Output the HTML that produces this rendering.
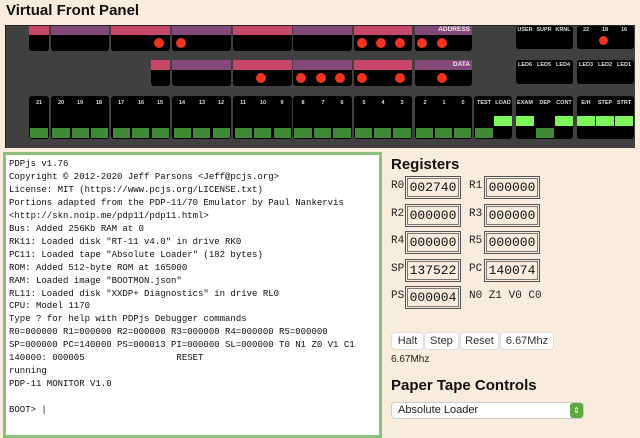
<!DOCTYPE html><html><head><style>
body{margin:0;width:640px;height:422px;overflow:hidden;background:#f9ecdc;font-family:"Liberation Sans",sans-serif;position:relative}
.a{position:absolute}
h1{position:absolute;left:6px;top:2px;margin:0;font-size:15px;font-weight:bold;color:#111}
.panel{left:5px;top:25px;width:629px;height:122px;background:#404040;border-top:1px solid #222;border-left:1px solid #222}
.bar{position:absolute;height:9px}
.pk{background:#c8466a}.pu{background:#824878}
.blk{position:absolute;background:#000;border-radius:0 0 3px 3px}
.sw{position:absolute;background:#000;border-radius:3px}
.d{position:absolute;width:10px;height:10px;border-radius:50%;background:#f03322}
.g{position:absolute;height:10px;background:#3f8a35}
.lg{position:absolute;height:10px;background:#7cf55a}
.l{position:absolute;color:#ddd;font-size:5.5px;font-weight:bold;text-align:center;width:20px}
.bt{position:absolute;color:#eee;font-size:6.5px;font-weight:bold;text-align:right}
.term{left:3px;top:152px;width:373px;height:280px;border:3px solid #8dc07a;background:#fff}
pre{margin:0;position:absolute;left:3px;top:3px;font-family:"Liberation Mono",monospace;font-size:9px;line-height:12.95px;color:#111}
.rl{position:absolute;font-family:"Liberation Mono",monospace;font-size:11px;color:#222}
.rb{position:absolute;width:54px;height:21px;border:1px solid #555;box-shadow:inset 0 0 0 1px #f9ecdc,inset 0 0 0 2px #777;font-family:"Liberation Mono",monospace;font-size:13px;line-height:21px;text-align:center;color:#111}
.btn{position:absolute;top:333px;height:16px;background:#fff;border-radius:3px;box-shadow:0 0 0 1px #ddd;font-size:11px;line-height:16px;text-align:center;color:#333}
h2{position:absolute;margin:0;font-size:15px;font-weight:bold;color:#111}
</style></head><body>
<h1>Virtual Front Panel</h1>
<div class="a panel"></div>
<!-- row1 bars -->
<div class="bar pk" style="left:29px;top:26px;width:20px"></div>
<div class="bar pu" style="left:51px;top:26px;width:58px"></div>
<div class="bar pk" style="left:111px;top:26px;width:59px"></div>
<div class="bar pu" style="left:172px;top:26px;width:59px"></div>
<div class="bar pk" style="left:233px;top:26px;width:59px"></div>
<div class="bar pu" style="left:293px;top:26px;width:59px"></div>
<div class="bar pk" style="left:354px;top:26px;width:58px"></div>
<div class="bar pu" style="left:415px;top:26px;width:57px"></div>
<div class="bt" style="left:415px;top:26px;width:55px">ADDRESS</div>
<div class="blk" style="left:29px;top:35px;width:20px;height:16px"></div>
<div class="blk" style="left:51px;top:35px;width:58px;height:16px"></div>
<div class="blk" style="left:111px;top:35px;width:59px;height:16px"></div>
<div class="blk" style="left:172px;top:35px;width:59px;height:16px"></div>
<div class="blk" style="left:233px;top:35px;width:59px;height:16px"></div>
<div class="blk" style="left:293px;top:35px;width:59px;height:16px"></div>
<div class="blk" style="left:354px;top:35px;width:58px;height:16px"></div>
<div class="blk" style="left:415px;top:35px;width:57px;height:16px"></div>
<div class="d" style="left:154px;top:38px"></div><div class="d" style="left:176px;top:38px"></div>
<div class="d" style="left:357px;top:38px"></div><div class="d" style="left:376px;top:38px"></div><div class="d" style="left:395px;top:38px"></div>
<div class="d" style="left:417px;top:38px"></div><div class="d" style="left:437px;top:38px"></div>
<!-- row2 -->
<div class="bar pk" style="left:151px;top:60px;width:19px;height:10px"></div>
<div class="bar pu" style="left:172px;top:60px;width:59px;height:10px"></div>
<div class="bar pk" style="left:233px;top:60px;width:59px;height:10px"></div>
<div class="bar pu" style="left:293px;top:60px;width:59px;height:10px"></div>
<div class="bar pk" style="left:354px;top:60px;width:58px;height:10px"></div>
<div class="bar pu" style="left:415px;top:60px;width:57px;height:10px"></div>
<div class="bt" style="left:415px;top:61px;width:55px">DATA</div>
<div class="blk" style="left:151px;top:70px;width:19px;height:16px"></div>
<div class="blk" style="left:172px;top:70px;width:59px;height:16px"></div>
<div class="blk" style="left:233px;top:70px;width:59px;height:16px"></div>
<div class="blk" style="left:293px;top:70px;width:59px;height:16px"></div>
<div class="blk" style="left:354px;top:70px;width:58px;height:16px"></div>
<div class="blk" style="left:415px;top:70px;width:57px;height:16px"></div>
<div class="d" style="left:256px;top:73px"></div>
<div class="d" style="left:296px;top:73px"></div><div class="d" style="left:316px;top:73px"></div><div class="d" style="left:335px;top:73px"></div>
<div class="d" style="left:357px;top:73px"></div><div class="d" style="left:395px;top:73px"></div>
<div class="d" style="left:437px;top:73px"></div>
<!-- right top groups -->
<div class="sw" style="left:516px;top:26px;width:57px;height:23px"></div>
<div class="sw" style="left:577px;top:26px;width:57px;height:23px"></div>
<div class="l" style="left:515px;top:27px">USER</div><div class="l" style="left:534px;top:27px">SUPR</div><div class="l" style="left:553px;top:27px">KRNL</div>
<div class="l" style="left:576px;top:27px">22</div><div class="l" style="left:595px;top:27px">18</div><div class="l" style="left:614px;top:27px">16</div>
<div class="d" style="left:598px;top:36px;width:9px;height:9px;left:599px"></div>
<div class="sw" style="left:516px;top:60px;width:57px;height:24px"></div>
<div class="sw" style="left:577px;top:60px;width:57px;height:24px"></div>
<div class="l" style="left:515px;top:62px">LED6</div><div class="l" style="left:534px;top:62px">LED5</div><div class="l" style="left:553px;top:62px">LED4</div>
<div class="l" style="left:576px;top:62px">LED3</div><div class="l" style="left:595px;top:62px">LED2</div><div class="l" style="left:614px;top:62px">LED1</div>
<!-- row3 switches -->
<div class="sw" style="left:29px;top:96px;width:20px;height:43px"></div>
<div class="sw" style="left:51px;top:96px;width:58px;height:43px"></div>
<div class="sw" style="left:111px;top:96px;width:59px;height:43px"></div>
<div class="sw" style="left:172px;top:96px;width:59px;height:43px"></div>
<div class="sw" style="left:233px;top:96px;width:59px;height:43px"></div>
<div class="sw" style="left:293px;top:96px;width:59px;height:43px"></div>
<div class="sw" style="left:354px;top:96px;width:58px;height:43px"></div>
<div class="sw" style="left:415px;top:96px;width:57px;height:43px"></div>
<div class="sw" style="left:474px;top:96px;width:38px;height:43px"></div>
<div class="sw" style="left:516px;top:96px;width:57px;height:43px"></div>
<div class="sw" style="left:577px;top:96px;width:57px;height:43px"></div>
<div class="l" style="left:29px;top:100px">21</div>
<div class="l" style="left:51px;top:100px">20</div><div class="l" style="left:70px;top:100px">19</div><div class="l" style="left:89px;top:100px">18</div>
<div class="l" style="left:111px;top:100px">17</div><div class="l" style="left:131px;top:100px">16</div><div class="l" style="left:150px;top:100px">15</div>
<div class="l" style="left:172px;top:100px">14</div><div class="l" style="left:192px;top:100px">13</div><div class="l" style="left:211px;top:100px">12</div>
<div class="l" style="left:233px;top:100px">11</div><div class="l" style="left:253px;top:100px">10</div><div class="l" style="left:272px;top:100px">9</div>
<div class="l" style="left:293px;top:100px">8</div><div class="l" style="left:313px;top:100px">7</div><div class="l" style="left:332px;top:100px">6</div>
<div class="l" style="left:354px;top:100px">5</div><div class="l" style="left:373px;top:100px">4</div><div class="l" style="left:392px;top:100px">3</div>
<div class="l" style="left:415px;top:100px">2</div><div class="l" style="left:434px;top:100px">1</div><div class="l" style="left:453px;top:100px">0</div>
<div class="l" style="left:474px;top:100px">TEST</div><div class="l" style="left:493px;top:100px">LOAD</div>
<div class="l" style="left:515px;top:100px">EXAM</div><div class="l" style="left:535px;top:100px">DEP</div><div class="l" style="left:554px;top:100px">CONT</div>
<div class="l" style="left:576px;top:100px">E/H</div><div class="l" style="left:595px;top:100px">STEP</div><div class="l" style="left:614px;top:100px">STRT</div>
<div class="g" style="left:30px;top:128px;width:18px"></div>
<div class="g" style="left:52px;top:128px;width:18px"></div><div class="g" style="left:72px;top:128px;width:17px"></div><div class="g" style="left:91px;top:128px;width:17px"></div>
<div class="g" style="left:113px;top:128px;width:17px"></div><div class="g" style="left:132px;top:128px;width:17px"></div><div class="g" style="left:152px;top:128px;width:17px"></div>
<div class="g" style="left:174px;top:128px;width:17px"></div><div class="g" style="left:193px;top:128px;width:17px"></div><div class="g" style="left:213px;top:128px;width:17px"></div>
<div class="g" style="left:235px;top:128px;width:17px"></div><div class="g" style="left:254px;top:128px;width:17px"></div><div class="g" style="left:274px;top:128px;width:17px"></div>
<div class="g" style="left:294px;top:128px;width:18px"></div><div class="g" style="left:314px;top:128px;width:17px"></div><div class="g" style="left:333px;top:128px;width:18px"></div>
<div class="g" style="left:355px;top:128px;width:17px"></div><div class="g" style="left:374px;top:128px;width:17px"></div><div class="g" style="left:393px;top:128px;width:18px"></div>
<div class="g" style="left:416px;top:128px;width:17px"></div><div class="g" style="left:435px;top:128px;width:17px"></div><div class="g" style="left:454px;top:128px;width:17px"></div>
<div class="g" style="left:475px;top:128px;width:18px"></div>
<div class="lg" style="left:494px;top:116px;width:18px"></div>
<div class="lg" style="left:516px;top:116px;width:18px"></div>
<div class="g" style="left:536px;top:128px;width:18px"></div>
<div class="lg" style="left:555px;top:116px;width:18px"></div>
<div class="lg" style="left:577px;top:116px;width:18px"></div><div class="lg" style="left:596px;top:116px;width:18px"></div><div class="lg" style="left:615px;top:116px;width:18px"></div>
<!-- terminal -->
<div class="a term"><pre>PDPjs v1.76
Copyright © 2012-2020 Jeff Parsons &lt;Jeff@pcjs.org&gt;
License: MIT (https://www.pcjs.org/LICENSE.txt)
Portions adapted from the PDP-11/70 Emulator by Paul Nankervis
&lt;http://skn.noip.me/pdp11/pdp11.html&gt;
Bus: Added 256Kb RAM at 0
RK11: Loaded disk "RT-11 v4.0" in drive RK0
PC11: Loaded tape "Absolute Loader" (182 bytes)
ROM: Added 512-byte ROM at 165000
RAM: Loaded image "BOOTMON.json"
RL11: Loaded disk "XXDP+ Diagnostics" in drive RL0
CPU: Model 1170
Type ? for help with PDPjs Debugger commands
R0=000000 R1=000000 R2=000000 R3=000000 R4=000000 R5=000000
SP=000000 PC=140000 PS=000013 PI=000000 SL=000000 T0 N1 Z0 V1 C1
140000: 000005                 RESET
running
PDP-11 MONITOR V1.0

BOOT&gt; |</pre></div>
<!-- registers -->
<h2 style="left:391px;top:156px">Registers</h2>
<div class="rl" style="left:391px;top:180px">R0</div><div class="rb" style="left:405px;top:176px">002740</div>
<div class="rl" style="left:469px;top:180px">R1</div><div class="rb" style="left:484px;top:176px">000000</div>
<div class="rl" style="left:391px;top:208px">R2</div><div class="rb" style="left:405px;top:204px">000000</div>
<div class="rl" style="left:469px;top:208px">R3</div><div class="rb" style="left:484px;top:204px">000000</div>
<div class="rl" style="left:391px;top:235px">R4</div><div class="rb" style="left:405px;top:231px">000000</div>
<div class="rl" style="left:469px;top:235px">R5</div><div class="rb" style="left:484px;top:231px">000000</div>
<div class="rl" style="left:391px;top:263px">SP</div><div class="rb" style="left:405px;top:259px">137522</div>
<div class="rl" style="left:469px;top:263px">PC</div><div class="rb" style="left:484px;top:259px">140074</div>
<div class="rl" style="left:391px;top:290px">PS</div><div class="rb" style="left:405px;top:286px">000004</div>
<div class="rl" style="left:469px;top:290px">N0 Z1 V0 C0</div>
<div class="btn" style="left:392px;width:31px">Halt</div>
<div class="btn" style="left:425px;width:33px">Step</div>
<div class="btn" style="left:461px;width:37px">Reset</div>
<div class="btn" style="left:501px;width:52px">6.67Mhz</div>
<div class="a" style="left:391px;top:354px;font-size:10px;color:#222">6.67Mhz</div>
<h2 style="left:391px;top:377px">Paper Tape Controls</h2>
<div class="a" style="left:392px;top:403px;width:191px;height:15px;background:#fff;border-radius:3px;box-shadow:0 0 0 1px #ccc;font-size:11px;line-height:15px;color:#222;text-indent:6px">Absolute Loader</div>
<div class="a" style="left:570px;top:403px;width:13px;height:15px;background:#5ca83e;border-radius:3px;color:#fff;font-size:8px;line-height:15px;text-align:center">⇕</div>
</body></html>
